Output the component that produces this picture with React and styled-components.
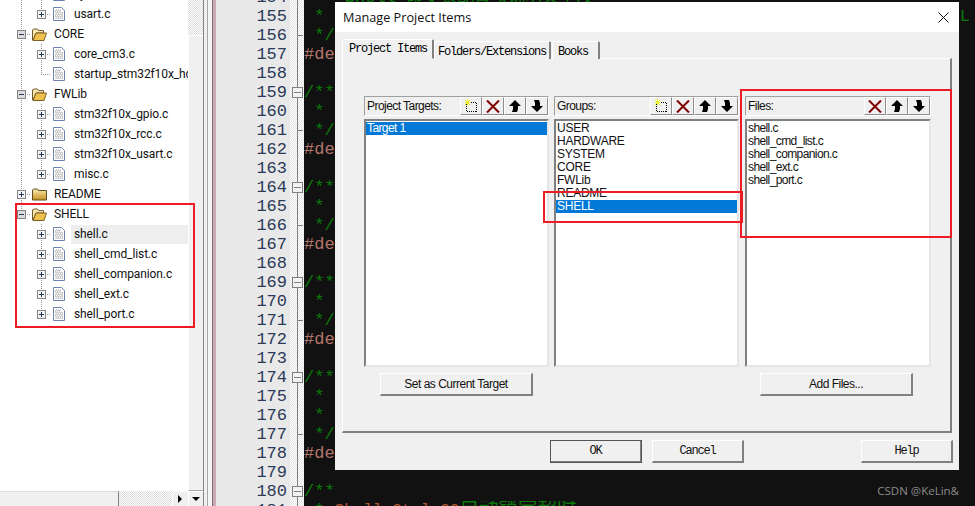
import React from "react";
import styled, { createGlobalStyle } from "styled-components";

const Global = createGlobalStyle`
    html, body { margin: 0; padding: 0; background: #111; }
    * { box-sizing: border-box; }
`;

const dither = `repeating-conic-gradient(#dcdcdc 0 25%, #fff 0 50%) 0 0 / 2px 2px`;
const legacyFont = `"Liberation Sans", Arial, sans-serif`;
const monoFont = `"Liberation Mono", "Courier New", monospace`;

const Page = styled.div`
    position: relative;
    display: flex;
    width: 975px;
    height: 506px;
    overflow: hidden;
    background: #111;
`;

/* project tree on the left */
const Sidebar = styled.div`
    display: grid;
    flex: none;
    grid-template-columns: 188px 16px 8px;
    grid-template-rows: 491px 15px;
    width: 212px;
    height: 506px;
    background: #f0f0f0;
`;

const TreePane = styled.div`
    height: 491px;
    overflow: hidden;
    background: #fff;
    padding-top: 4px;
`;

const TreeList = styled.div`
    margin-top: -20px;
`;

const Row = styled.div`
    display: flex;
    align-items: center;
    height: 20px;
    padding-left: 11px;
`;

const line = "#9a9a9a";
const Cell = styled.div`
    display: flex;
    flex: none;
    align-items: center;
    justify-content: center;
    width: 20px;
    height: 20px;
    background-repeat: no-repeat;
    background-image:
        ${(p) => (p.$v ? `repeating-linear-gradient(to bottom, ${line} 0 1px, transparent 1px 2px)` : "none")},
        ${(p) => (p.$h ? `repeating-linear-gradient(to right, ${line} 0 1px, transparent 1px 2px)` : "none")};
    background-size: 1px ${(p) => (p.$v === "half" ? "10px" : "20px")}, 10px 1px;
    background-position: 10px 0, 10px 10px;
`;

const Expander = styled.span`
    display: block;
    width: 9px;
    height: 9px;
    border: 1px solid #858585;
    background-color: ${(p) => (p.$open ? "#dcdcdc" : "#f4f4f6")};
    background-repeat: no-repeat;
    background-image:
        linear-gradient(#26365a, #26365a),
        ${(p) => (p.$open ? "none" : "linear-gradient(#26365a, #26365a)")};
    background-size: 5px 1px, 1px 5px;
    background-position: 1px 3px, 3px 1px;
`;

const FolderSlot = styled.span`
    display: flex;
    flex: none;
    margin: 0 7px 0 1px;
`;

const FileSlot = styled.span`
    display: flex;
    flex: none;
    margin: 0 9px 0 2px;
`;

const RowLabel = styled.span`
    flex: 1;
    align-self: stretch;
    margin: 1px 0 0 -3px;
    padding-left: 3px;
    overflow: hidden;
    white-space: nowrap;
    font: 12px/19px Roboto, sans-serif;
    letter-spacing: -0.1px;
    color: #111;
    background: ${(p) => (p.$hover ? "#eee" : "transparent")};
`;

const VScroll = styled.div`
    display: flex;
    flex-direction: column;
    border-right: 1px solid #808080;
    background: ${dither};
`;

const VThumb = styled.div`
    flex: 1;
    margin-top: 35px;
    background: #f0f0f0;
    border-left: 1px solid #fff;
    border-top: 1px solid #fff;
    border-bottom: 1px solid #a8a8a8;
`;

const HScroll = styled.div`
    display: flex;
    background: ${dither};
`;

const HThumb = styled.div`
    width: 119px;
    background: #f0f0f0;
    border-top: 1px solid #dcdcdc;
    border-right: 1px solid #808080;
`;

const ArrowButton = styled.div`
    display: flex;
    align-items: center;
    justify-content: center;
    width: 16px;
    height: 15px;
    margin-left: auto;
    background: #f0f0f0;
    border-top: 1px solid #fff;
    border-left: 1px solid #fff;
    border-right: 1px solid ${(p) => (p.$corner ? "#808080" : "#f0f0f0")};
`;

const Divider = styled.div`
    grid-column: 3;
    grid-row: 1 / span 2;
    margin-left: 3px;
    width: 5px;
    background: #f4f4f4;
    border-left: 1px solid #a6a6a6;
`;

const PinkStrip = styled.div`
    flex: none;
    width: 4px;
    background: #c9a9b6;
    border-left: 1px solid #7d6c74;
`;

/* editor behind the dialog */
const Editor = styled.div`
    flex: 1;
    min-width: 0;
    margin-top: -12px;
`;

const CodeRow = styled.div`
    display: grid;
    grid-template-columns: 74px 14px 1fr;
    height: 19px;
`;

const LineNo = styled.div`
    padding-right: 3px;
    text-align: right;
    font: 17px/19px ${monoFont};
    color: #2b3a58;
    background: #e8e8e8;
`;

const Fold = styled.div`
    display: flex;
    align-items: center;
    justify-content: center;
    background-image:
        linear-gradient(#808080, #808080),
        ${(p) => (p.$tick ? "linear-gradient(#808080, #808080)" : "none")},
        repeating-conic-gradient(#e4e4e4 0 25%, #fff 0 50%);
    background-size: 1px 19px, 6px 1px, 2px 2px;
    background-position: 7px 0, 7px 9px, 0 0;
    background-repeat: no-repeat, no-repeat, repeat;
`;

const FoldBox = styled.span`
    display: block;
    width: 11px;
    height: 11px;
    border: 1px solid #808080;
    background: linear-gradient(#808080, #808080) center / 7px 1px no-repeat #f2f2f2;
`;

const Code = styled.div`
    overflow: hidden;
    white-space: pre;
    font: 17px/19px ${monoFont}, "Noto Sans CJK SC", monospace;
    color: ${(p) => (p.$tone === "macro" ? "#b4756b" : "#0b7a0b")};
`;

const EdgeMark = styled.span`
    float: right;
    margin-right: 5px;
`;

const Warm = styled.span`
    font-size: 16px;
    color: #b4562f;
`;

const CjkRun = styled.span`
    font-size: 19.5px;
`;

/* the dialog */
const Dialog = styled.div`
    position: absolute;
    left: 335px;
    top: 2px;
    width: 624px;
    height: 468px;
    background: #f0f0f0;
`;

const TitleBar = styled.div`
    display: flex;
    align-items: center;
    justify-content: space-between;
    height: 30px;
    padding: 0 10px 0 8px;
    background: #fff;
    font: 12.7px "Open Sans", sans-serif;
    color: #111;
`;

const TabStrip = styled.div`
    display: flex;
    align-items: flex-end;
    height: 20px;
    margin: 7px 0 -1px 7px;
    position: relative;
    z-index: 1;
`;

const Tab = styled.div`
    width: ${(p) => p.$width}px;
    height: ${(p) => (p.$active ? 20 : 18)}px;
    margin-right: ${(p) => (p.$active ? 0 : 1)}px;
    padding-top: ${(p) => (p.$active ? 1 : 2)}px;
    padding-left: ${(p) => p.$pad}px;
    font: 12px/16px ${monoFont};
    letter-spacing: -1.2px;
    white-space: nowrap;
    color: #000;
    background: #f0f0f0;
    border-top: 1px solid #fff;
    border-left: 1px solid #fff;
    border-right: 2px solid #808080;
    border-radius: 2px 2px 0 0;
    border-bottom: ${(p) => (p.$active ? "1px solid #f0f0f0" : "none")};
`;

const TabPanel = styled.div`
    display: grid;
    grid-template-columns: 185px 185px 187px;
    column-gap: 5px;
    align-content: start;
    width: 610px;
    height: 375px;
    margin-left: 7px;
    padding: 37px 0 0 21px;
    border-top: 1px solid #fff;
    border-left: 1px solid #fff;
    border-right: 2px solid #808080;
    border-bottom: 2px solid #808080;
`;

const Column = styled.div`
    display: flex;
    flex-direction: column;
    padding-left: ${(p) => p.$nudge || 0}px;
`;

const ColumnHead = styled.div`
    display: flex;
    align-items: center;
    height: 20px;
    padding-left: 2px;
    border-top: 1px solid #a0a0a0;
    border-left: 1px solid #a0a0a0;
    border-bottom: 1px solid #fff;
    border-right: 1px solid #fff;
    font: 12px ${legacyFont};
    letter-spacing: -0.55px;
    color: #111;
`;

const HeadTools = styled.div`
    display: flex;
    align-self: stretch;
    margin-left: auto;
    letter-spacing: 0;
`;

const ToolButton = styled.div`
    display: flex;
    align-items: center;
    justify-content: center;
    width: 22px;
    background: #f0f0f0;
    border-top: 1px solid #fff;
    border-left: 1px solid #fff;
    border-right: 1px solid #8c8c8c;
    border-bottom: 1px solid #8c8c8c;
`;

const ListBox = styled.div`
    height: 248px;
    margin: 3px 0 6px;
    padding: 1px 0;
    background: #fff;
    border-top: 2px solid #808080;
    border-left: 2px solid #808080;
    border-right: 2px solid #e6e6e6;
    border-bottom: 2px solid #e6e6e6;
`;

const ListItem = styled.div`
    height: 13px;
    padding-left: 1px;
    font: 12px/13px ${legacyFont};
    letter-spacing: ${(p) => (p.$tight ? "-0.6px" : "-0.25px")};
    color: ${(p) => (p.$selected ? "#fff" : "#111")};
    background: ${(p) => (p.$selected ? "#0078d7" : "transparent")};
`;

const PushButton = styled.div`
    display: flex;
    align-items: center;
    justify-content: center;
    width: ${(p) => p.$width || 92}px;
    height: 23px;
    margin-left: ${(p) => p.$inset || 0}px;
    background: #f0f0f0;
    border-top: 1px solid #fff;
    border-left: 1px solid #fff;
    border-right: 2px solid #808080;
    border-bottom: 2px solid #808080;
    outline: ${(p) => (p.$default ? "1px solid #555" : "none")};
    outline-offset: -1px;
    font: ${(p) => (p.$mono ? `12px ${monoFont}` : `12px ${legacyFont}`)};
    letter-spacing: ${(p) => (p.$mono ? "-1.2px" : "-0.5px")};
    color: #111;
`;

const DialogFooter = styled.div`
    display: flex;
    gap: 10px;
    margin: 7px 6px 0 215px;
`;

const HelpSlot = styled.div`
    margin-left: auto;
`;

const RedBox = styled.div`
    position: absolute;
    left: ${(p) => p.$x}px;
    top: ${(p) => p.$y}px;
    width: ${(p) => p.$w}px;
    height: ${(p) => p.$h}px;
    border: 2px solid #ed1c24;
`;

const Watermark = styled.div`
    position: absolute;
    right: 16px;
    bottom: 8px;
    font: 11.5px "Open Sans", sans-serif;
    color: #8c8c8c;
`;

const FileIcon = () => (
    <svg width="12" height="14" viewBox="0 0 12 14">
        <path d="M.5.5h8l3 3v10H.5z" fill="#fff" stroke="#6c84ab" />
        <path d="M2 2h6v3h2v7H2z" fill="#cfcfcf" />
        <path d="M2 2h1v1H2zM4 2h1v1H4zM6 2h1v1H6zM3 4h1v1H3zM5 4h1v1H5zM7 4h1v1H7zM2 6h1v1H2zM4 6h1v1H4zM6 6h1v1H6zM8 6h1v1H8zM3 8h1v1H3zM5 8h1v1H5zM7 8h1v1H7zM2 10h1v1H2zM4 10h1v1H4zM6 10h1v1H6zM8 10h1v1H8z" fill="#fff" />
    </svg>
);

const OpenFolder = () => (
    <svg width="15" height="13" viewBox="0 0 15 13">
        <path d="M.5 12V2L1.5 1h4l1 1.5h5V5H4L1 12z" fill="#f6e7b0" stroke="#6f5c2a" />
        <path d="M1 12.5 4 5h10.5L12 12.5z" fill="#f0c04e" stroke="#7a6026" />
    </svg>
);

const ClosedFolder = () => (
    <svg width="15" height="13" viewBox="0 0 15 13">
        <defs>
            <linearGradient id="closed-folder" x1="0" y1="0" x2="0" y2="1">
                <stop offset="0" stopColor="#fbeab0" />
                <stop offset="1" stopColor="#c8911f" />
            </linearGradient>
        </defs>
        <path d="M.5 12V2L1.5 1h4l1 1.5h8V12z" fill="url(#closed-folder)" stroke="#5f4d22" />
    </svg>
);

const NewIcon = () => (
    <svg width="14" height="14" viewBox="0 0 14 14" shapeRendering="crispEdges">
        <rect x="2.5" y="3.5" width="10" height="9" fill="none" stroke="#000" strokeDasharray="1 1" />
        <path d="M1 1h1v1H1zM5 1h1v1H5zM3 0h1v6H3zM1 3h5v1H1zM2 2h3v3H2zM1 5h1v1H1zM5 5h1v1H5z" fill="#eef02a" />
    </svg>
);

const RemoveIcon = () => (
    <svg width="14" height="13" viewBox="0 0 14 13">
        <path d="M1 .5 13 12.5M13 .5 1 12.5" stroke="#800000" strokeWidth="2" />
    </svg>
);

const UpIcon = () => (
    <svg width="12" height="12" viewBox="0 0 12 12">
        <path d="M6 0 12 6H9V9L8 12H3L4 9V6H0z" fill="#000" />
    </svg>
);

const DownIcon = () => (
    <svg width="12" height="12" viewBox="0 0 12 12">
        <path d="M6 12 12 6H9V3L8 0H3L4 3V6H0z" fill="#000" />
    </svg>
);

const CloseIcon = () => (
    <svg width="11" height="11" viewBox="0 0 11 11">
        <path d="M.5.5 10.5 10.5M10.5.5.5 10.5" stroke="#111" />
    </svg>
);

const Triangle = ({ dir }) => (
    <svg width="8" height="8" viewBox="0 0 8 8">
        <path d={dir === "right" ? "M2 0 6 4 2 8z" : "M0 2H8L4 6z"} fill="#000" />
    </svg>
);

const tree = [
    { name: "sys.c", file: true, expand: true, guide: true, v: "full" },
    { name: "usart.c", file: true, expand: true, guide: true, v: "half" },
    { name: "CORE", open: true },
    { name: "core_cm3.c", file: true, expand: true, guide: true, v: "full" },
    { name: "startup_stm32f10x_hd.s", file: true, guide: true, v: "half" },
    { name: "FWLib", open: true },
    { name: "stm32f10x_gpio.c", file: true, expand: true, guide: true, v: "full" },
    { name: "stm32f10x_rcc.c", file: true, expand: true, guide: true, v: "full" },
    { name: "stm32f10x_usart.c", file: true, expand: true, guide: true, v: "full" },
    { name: "misc.c", file: true, expand: true, guide: true, v: "half" },
    { name: "README" },
    { name: "SHELL", open: true, last: true },
    { name: "shell.c", file: true, expand: true, v: "full", hover: true },
    { name: "shell_cmd_list.c", file: true, expand: true, v: "full" },
    { name: "shell_companion.c", file: true, expand: true, v: "full" },
    { name: "shell_ext.c", file: true, expand: true, v: "full" },
    { name: "shell_port.c", file: true, expand: true, v: "half" },
];

const code = [
    [154, "  * Shell \u547d\u4ee4\u8868\u914d\u7f6e\u9879\u8bf4\u660e\u6587\u5b57\u6bb5"],
    [155, " *", "edge"],
    [156, " */", "tick"],
    [157, "#de", null, "macro"],
    [158, ""],
    [159, "/**", "box"],
    [160, " *"],
    [161, " */", "tick"],
    [162, "#de", null, "macro"],
    [163, ""],
    [164, "/**", "box"],
    [165, " *"],
    [166, " */", "tick"],
    [167, "#de", null, "macro"],
    [168, ""],
    [169, "/**", "box"],
    [170, " *"],
    [171, " */", "tick"],
    [172, "#de", null, "macro"],
    [173, ""],
    [174, "/**", "box"],
    [175, " *"],
    [176, " *"],
    [177, " */", "tick"],
    [178, "#de", null, "macro"],
    [179, ""],
    [180, "/**", "box"],
];

const groups = ["USER", "HARDWARE", "SYSTEM", "CORE", "FWLib", "README", "SHELL"];
const files = ["shell.c", "shell_cmd_list.c", "shell_companion.c", "shell_ext.c", "shell_port.c"];

const TreeRow = ({ item }) => (
    <Row>
        {item.file ? (
            <>
                <Cell $v={item.guide ? "full" : null} />
                <Cell $v={item.v} $h>
                    {item.expand && <Expander />}
                </Cell>
                <FileSlot>
                    <FileIcon />
                </FileSlot>
            </>
        ) : (
            <>
                <Cell $v={item.last ? "half" : "full"} $h>
                    <Expander $open={item.open} />
                </Cell>
                <FolderSlot>{item.open ? <OpenFolder /> : <ClosedFolder />}</FolderSlot>
            </>
        )}
        <RowLabel $hover={item.hover}>{item.name}</RowLabel>
    </Row>
);

const App = () => (
    <Page>
        <Global />
        <Sidebar>
            <TreePane>
                <TreeList>
                    {tree.map((item) => (
                        <TreeRow key={item.name} item={item} />
                    ))}
                </TreeList>
            </TreePane>
            <VScroll>
                <VThumb />
            </VScroll>
            <Divider />
            <HScroll>
                <HThumb />
                <ArrowButton>
                    <Triangle dir="right" />
                </ArrowButton>
            </HScroll>
            <ArrowButton $corner>
                <Triangle dir="down" />
            </ArrowButton>
        </Sidebar>
        <PinkStrip />
        <Editor>
            {code.map(([no, text, mark, tone]) => (
                <CodeRow key={no}>
                    <LineNo>{no}</LineNo>
                    <Fold $tick={mark === "tick"}>{mark === "box" && <FoldBox />}</Fold>
                    <Code $tone={tone}>
                        {mark === "edge" && <EdgeMark>L</EdgeMark>}
                        {text}
                    </Code>
                </CodeRow>
            ))}
            <CodeRow>
                <LineNo>181</LineNo>
                <Fold />
                <Code>
                    {" * "}
                    <Warm>Shell Ctrl 30</Warm>
                    <CjkRun>自动锁定超时</CjkRun>
                </Code>
            </CodeRow>
        </Editor>

        <Dialog>
            <TitleBar>
                Manage Project Items
                <CloseIcon />
            </TitleBar>
            <TabStrip>
                <Tab $active $width={92} $pad={6}>Project Items</Tab>
                <Tab $width={117} $pad={3}>Folders/Extensions</Tab>
                <Tab $width={48} $pad={5}>Books</Tab>
            </TabStrip>
            <TabPanel>
                <Column>
                    <ColumnHead>
                        Project Targets:
                        <HeadTools>
                            <ToolButton><NewIcon /></ToolButton>
                            <ToolButton><RemoveIcon /></ToolButton>
                            <ToolButton><UpIcon /></ToolButton>
                            <ToolButton><DownIcon /></ToolButton>
                        </HeadTools>
                    </ColumnHead>
                    <ListBox>
                        <ListItem $selected $tight>Target 1</ListItem>
                    </ListBox>
                    <PushButton $width={153} $inset={16}>Set as Current Target</PushButton>
                </Column>
                <Column>
                    <ColumnHead>
                        Groups:
                        <HeadTools>
                            <ToolButton><NewIcon /></ToolButton>
                            <ToolButton><RemoveIcon /></ToolButton>
                            <ToolButton><UpIcon /></ToolButton>
                            <ToolButton><DownIcon /></ToolButton>
                        </HeadTools>
                    </ColumnHead>
                    <ListBox>
                        {groups.map((g) => (
                            <ListItem key={g} $selected={g === "SHELL"}>{g}</ListItem>
                        ))}
                    </ListBox>
                </Column>
                <Column $nudge={1}>
                    <ColumnHead>
                        Files:
                        <HeadTools>
                            <ToolButton><RemoveIcon /></ToolButton>
                            <ToolButton><UpIcon /></ToolButton>
                            <ToolButton><DownIcon /></ToolButton>
                        </HeadTools>
                    </ColumnHead>
                    <ListBox>
                        {files.map((f) => (
                            <ListItem key={f} $tight>{f}</ListItem>
                        ))}
                    </ListBox>
                    <PushButton $width={153} $inset={15}>Add Files...</PushButton>
                </Column>
            </TabPanel>
            <DialogFooter>
                <PushButton $mono $default>OK</PushButton>
                <PushButton $mono>Cancel</PushButton>
                <HelpSlot>
                    <PushButton $mono>Help</PushButton>
                </HelpSlot>
            </DialogFooter>
        </Dialog>

        <RedBox $x={15} $y={203} $w={180} $h={125} />
        <RedBox $x={543} $y={191} $w={200} $h={32} />
        <RedBox $x={740} $y={89} $w={212} $h={149} />
        <Watermark>CSDN @KeLin&amp;</Watermark>
    </Page>
);

export default App;
